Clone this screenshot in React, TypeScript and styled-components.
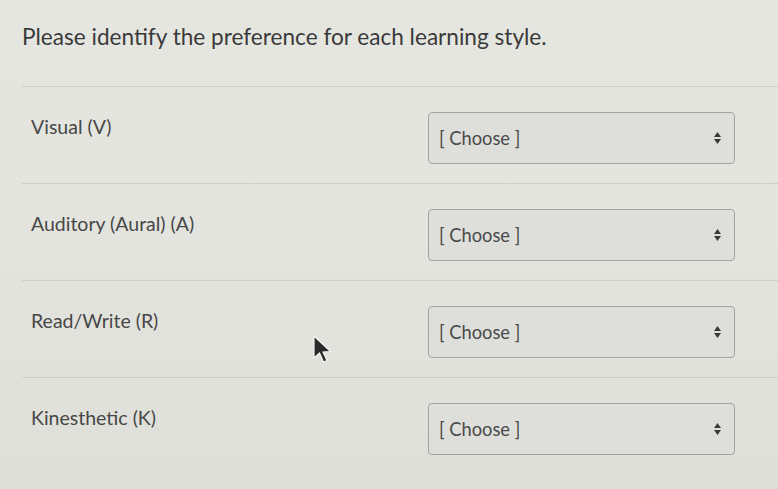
import React from "react";
import styled, { createGlobalStyle } from "styled-components";

const Global = createGlobalStyle`
  html, body { margin: 0; padding: 0; background: #e3e3dd; }
  body { font-family: Lato, "Open Sans", "Liberation Sans", sans-serif; color: #3d3d3d; }
`;

const Page = styled.div`
  position: relative;
  width: 778px;
  height: 489px;
  overflow: hidden;
  box-sizing: border-box;
  padding: 22px 0 0 22px;
  background: linear-gradient(180deg, #e6e6e1 0%, #e4e4de 50%, #dfdfd9 100%);
`;

const Title = styled.h1`
  margin: 0;
  font-size: 22.6px;
  line-height: 30px;
  font-weight: 400;
  color: #3a3a3a;
  padding-bottom: 34px;
  border-bottom: 1px solid #cfcfc9;
`;

const Row = styled.div`
  display: flex;
  align-items: flex-start;
  height: 97px;
  box-sizing: border-box;
  padding: 25px 0 0 9px;
  border-bottom: 1px solid #cfcfc9;
  &:last-of-type { border-bottom: none; }
`;

const Label = styled.div`
  width: 397px;
  font-size: 19.5px;
  line-height: 24px;
  color: #474747;
  padding-top: 3px;
`;

const Select = styled.div`
  width: 307px;
  height: 52px;
  box-sizing: border-box;
  border: 1px solid #a3a3a0;
  border-radius: 4px;
  background: #dededa;
  display: flex;
  align-items: center;
  justify-content: space-between;
  padding: 0 13px 0 10px;
  font-size: 18.3px;
  color: #4a4a4a;
`;

const Arrows = styled.svg`
  width: 7px;
  height: 12px;
`;

const Cursor = styled.svg`
  position: absolute;
  left: 311px;
  top: 334px;
  width: 24px;
  height: 32px;
`;

const items = ["Visual (V)", "Auditory (Aural) (A)", "Read/Write (R)", "Kinesthetic (K)"];

export default function App() {
  return (
    <>
      <Global />
      <Page>
        <Title>Please identify the preference for each learning style.</Title>
        {items.map((t) => (
          <Row key={t}>
            <Label>{t}</Label>
            <Select>
              <span>[ Choose ]</span>
              <Arrows viewBox="0 0 7 12">
                <path d="M3.5 0 L7 5 L0 5 Z M0 7 L7 7 L3.5 12 Z" fill="#3a3a3a" />
              </Arrows>
            </Select>
          </Row>
        ))}
        <Cursor viewBox="0 0 24 32">
          <path d="M3 2 L3 24 L8.5 19 L12.5 28 L16 26.5 L12 18 L19.5 17.5 Z" fill="#2a2a2a" stroke="#f4f4f0" strokeWidth="1.2" />
        </Cursor>
      </Page>
    </>
  );
}
